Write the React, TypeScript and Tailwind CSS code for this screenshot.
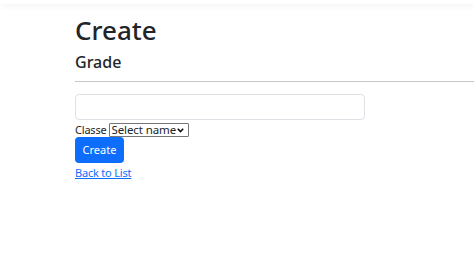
export default function App() {
  return (
    <div
      className="relative min-h-[271px] bg-white text-[11px] text-[#212529]"
      style={{ fontFamily: '"Noto Sans", "Open Sans", sans-serif' }}
    >
      <div className="h-[4px] bg-white shadow-[0_2px_6px_rgba(0,0,0,0.06)]" />
      <main className="pl-[75px]">
        <h1 className="mt-[10px] text-[26px] font-medium leading-[32px]">Create</h1>
        <h4 className="mt-[6px] text-[16px] font-medium leading-[20px]">Grade</h4>
        <hr className="mt-[9px] border-t border-[#c8c8c8]" />
        <form className="mt-[12px] flex flex-col items-start">
          <input
            type="text"
            className="h-[26px] w-[290px] rounded-[4px] border border-[#dee2e6] px-2 outline-none"
          />
          <div className="mt-[3px] flex items-center gap-[2px] leading-[14px]">
            <label className="tracking-[-0.2px]">Classe</label>
            <div className="relative flex">
              <select className="h-[14px] w-[80px] appearance-none rounded-[1px] border border-[#767676] bg-white pl-[2px] pr-[9px] text-[11.5px] leading-[12px] tracking-[-0.1px] text-[#212529]">
                <option>Select name</option>
              </select>
              <svg
                className="pointer-events-none absolute right-[5px] top-[5px]"
                width="7"
                height="5"
                viewBox="0 0 7 5"
              >
                <path d="M0.8 0.8 L3.5 3.6 L6.2 0.8" fill="none" stroke="#111" strokeWidth="1.6" />
              </svg>
            </div>
          </div>
          <button
            type="button"
            className="h-[26px] w-[49px] rounded-[4px] bg-[#0d6efd] text-[11px] text-white"
          >
            Create
          </button>
          <a href="#" className="mt-[2px] leading-[16px] tracking-[-0.2px] text-[#0d6efd] underline">
            Back to List
          </a>
        </form>
      </main>
    </div>
  );
}
